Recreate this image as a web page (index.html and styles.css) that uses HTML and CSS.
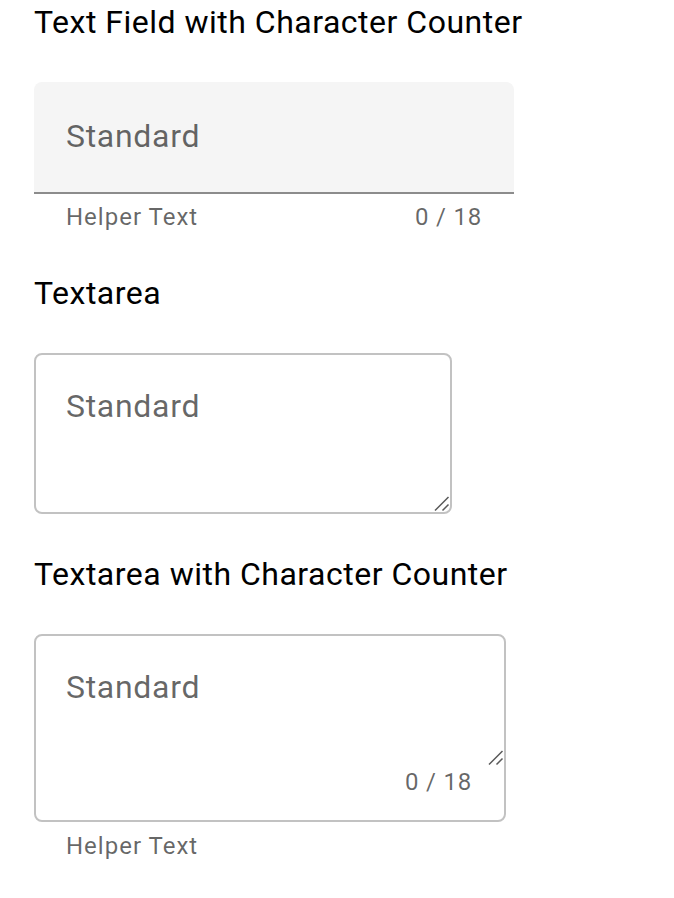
FILE: index.html
```html
<!DOCTYPE html>
<html>
<head>
    <title>Text Fields</title>
    <link rel="stylesheet" href="styles.css">
</head>
<body>

    <h2 class="demo-title">Text Field with Character Counter</h2>
    <div class="filled-field">
        <span class="field-label">Standard</span>
    </div>
    <div class="helper-line helper-wide">
        <span>Helper Text</span>
        <span class="counter">0 / 18</span>
    </div>

    <h2 class="demo-title">Textarea</h2>
    <div class="outlined-field textarea-small">
        <div class="textarea-area area-full">
            <span class="field-label">Standard</span>
            <svg class="grip" width="16" height="16" viewBox="0 0 16 16">
                <path d="M14.5 1 L1 14.5 M14.5 8.5 L8.5 14.5" stroke="#5a5a5a" stroke-width="1.5" fill="none"/>
            </svg>
        </div>
    </div>

    <h2 class="demo-title">Textarea with Character Counter</h2>
    <div class="outlined-field textarea-large">
        <div class="textarea-area area-counted">
            <span class="field-label">Standard</span>
            <svg class="grip" width="16" height="16" viewBox="0 0 16 16">
                <path d="M14.5 1 L1 14.5 M14.5 8.5 L8.5 14.5" stroke="#5a5a5a" stroke-width="1.5" fill="none"/>
            </svg>
        </div>
        <div class="inner-counter">0 / 18</div>
    </div>
    <div class="helper-line helper-large">
        <span>Helper Text</span>
    </div>

</body>
</html>
```

FILE: styles.css
```css
body { margin: 0; padding: 2px 0 0 34px; font-family: Roboto, "Liberation Sans", sans-serif; background: #fff; }
.demo-title { margin: 40px 0 0; font-size: 32px; line-height: 40px; font-weight: 400; letter-spacing: 0.5px; color: #000; }
.demo-title:first-child { margin-top: 0; }

.field-label { display: block; font-size: 32px; line-height: 40px; letter-spacing: 0.7px; color: rgba(0, 0, 0, 0.6); }

.filled-field { box-sizing: border-box; width: 480px; height: 112px; margin-top: 40px; padding: 34px 32px 0; background: #f5f5f5; border-radius: 8px 8px 0 0; border-bottom: 2px solid #8c8c8c; }

.helper-line { box-sizing: border-box; display: flex; justify-content: space-between; margin-top: 7px; padding: 0 32px; font-size: 24px; line-height: 32px; letter-spacing: 1px; color: rgba(0, 0, 0, 0.6); }
.helper-line .counter { letter-spacing: 0.8px; }
.helper-wide { width: 480px; }
.helper-large { width: 472px; margin-top: 8px; }

.outlined-field { box-sizing: border-box; margin-top: 40px; border: 2px solid #c2c2c2; border-radius: 8px; }
.textarea-small { width: 418px; height: 161px; }
.textarea-large { width: 472px; height: 188px; padding-bottom: 22px; }

.textarea-area { position: relative; box-sizing: border-box; padding: 31px 30px 0; }
.area-full { height: 100%; }
.area-counted { height: 130px; }
.grip { position: absolute; right: 0; bottom: 0; }

.inner-counter { padding-right: 32px; text-align: right; font-size: 24px; line-height: 32px; letter-spacing: 0.8px; color: rgba(0, 0, 0, 0.6); }
```
